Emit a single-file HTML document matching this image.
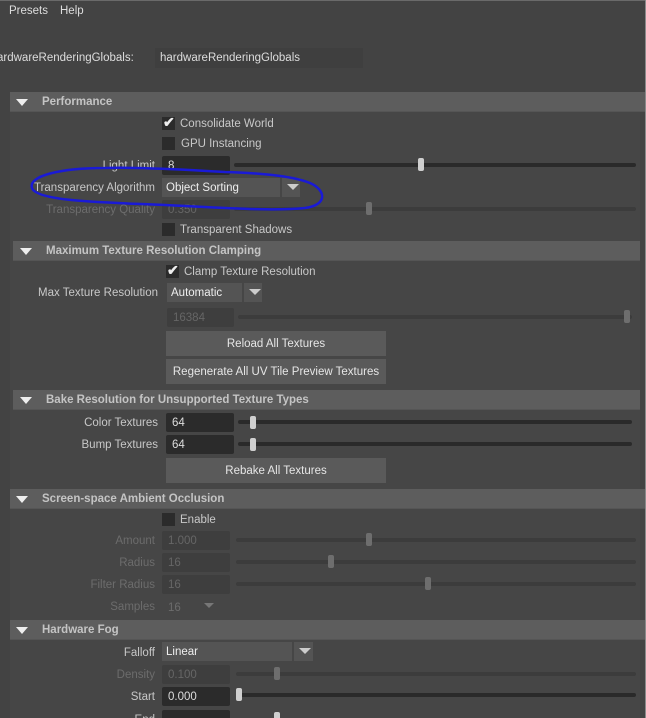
<!DOCTYPE html>
<html><head><style>
*{margin:0;padding:0;box-sizing:border-box}
html,body{width:646px;height:718px;overflow:hidden}
body{background:#434343;font-family:"Liberation Sans",sans-serif;font-size:11.5px;color:#c8c8c8;position:relative}
.a{position:absolute;white-space:nowrap}
.t{position:absolute;white-space:nowrap;line-height:14px}
.r{text-align:right}
.dim{color:#6c6c6c}
.hdr{position:absolute;height:20px;background:#5d5d5d;border-bottom:1px solid #555;font-weight:bold;color:#c4c4c4;line-height:20px}
.tri{position:absolute;top:7px;width:0;height:0;border-left:6px solid transparent;border-right:6px solid transparent;border-top:7px solid #eee}
.f{position:absolute;height:19px;background:#2b2b2b;border-radius:2px;color:#ddd;line-height:20px;padding-left:6px}
.fd{background:#3e3e3e;color:#666}
.dd{position:absolute;height:19px;background:#545454;color:#eee;line-height:20px;padding-left:4px}
.arr{position:absolute;height:19px;background:#545454}
.arr:after{content:"";position:absolute;left:5px;top:6px;border-left:6px solid transparent;border-right:6px solid transparent;border-top:6px solid #ccc}
.cb{position:absolute;width:13px;height:13px;background:#2b2b2b}
.ck{position:absolute;left:1px;top:-3px;font-size:14px;color:#eee;font-weight:bold}
.tr{position:absolute;height:4px;background:#2a2a2a;border-radius:2px}
.trd{background:#3c3c3c}
.h{position:absolute;width:6px;height:13px;background:#cfcfcf;border-radius:2px}
.hd{background:#6e6e6e}
.btn{position:absolute;height:25px;background:#5a5a5a;color:#e6e6e6;text-align:center;line-height:26px}
</style></head><body>
<div class="a" style="left:0;top:0;width:646px;height:1px;background:#6a6a6a"></div>
<div class="a" style="left:645px;top:0;width:1px;height:718px;background:#8a8a8a"></div>
<div class="t" style="left:9px;top:4px;color:#ddd">Presets</div>
<div class="t" style="left:60px;top:4px;color:#ddd">Help</div>
<div class="t" style="left:-3px;top:51px;color:#ddd">ardwareRenderingGlobals:</div>
<div class="a" style="left:155px;top:48px;width:208px;height:20px;background:#3f3f3f"></div>
<div class="t" style="left:160px;top:51px;color:#ddd">hardwareRenderingGlobals</div>

<div class="a" style="left:10px;top:112px;width:630px;height:606px;background:#464646"></div>

<div class="hdr" style="left:10px;top:92px;width:635px;padding-left:32px">Performance<div class="tri" style="left:6px"></div></div>
<div class="cb" style="left:162px;top:117px"><span class="ck">✔</span></div><div class="t" style="left:180px;top:117px">Consolidate World</div>
<div class="cb" style="left:162px;top:137px"></div><div class="t" style="left:181px;top:137px">GPU Instancing</div>
<div class="t r" style="left:0;width:155px;top:159px">Light Limit</div>
<div class="f" style="left:162px;top:156px;width:68px">8</div>
<div class="tr" style="left:234px;top:163px;width:402px"></div><div class="h" style="left:418px;top:158px"></div>
<div class="t r" style="left:0;width:155px;top:181px">Transparency Algorithm</div>
<div class="dd" style="left:162px;top:178px;width:118px">Object Sorting</div><div class="arr" style="left:282px;top:178px;width:18px"></div>
<div class="t r dim" style="left:0;width:155px;top:203px">Transparency Quality</div>
<div class="f fd" style="left:162px;top:200px;width:68px">0.350</div>
<div class="tr trd" style="left:234px;top:207px;width:402px"></div><div class="h hd" style="left:366px;top:202px"></div>
<div class="cb" style="left:162px;top:223px"></div><div class="t" style="left:180px;top:223px">Transparent Shadows</div>

<div class="hdr" style="left:13px;top:241px;width:627px;padding-left:33px">Maximum Texture Resolution Clamping<div class="tri" style="left:7px"></div></div>
<div class="cb" style="left:166px;top:265px"><span class="ck">✔</span></div><div class="t" style="left:184px;top:265px">Clamp Texture Resolution</div>
<div class="t r" style="left:0;width:158px;top:286px">Max Texture Resolution</div>
<div class="dd" style="left:167px;top:283px;width:75px">Automatic</div><div class="arr" style="left:244px;top:283px;width:18px"></div>
<div class="f fd" style="left:167px;top:308px;width:67px">16384</div>
<div class="tr trd" style="left:238px;top:315px;width:394px"></div><div class="h hd" style="left:624px;top:310px"></div>
<div class="btn" style="left:166px;top:331px;width:220px">Reload All Textures</div>
<div class="btn" style="left:166px;top:359px;width:220px">Regenerate All UV Tile Preview Textures</div>

<div class="hdr" style="left:13px;top:390px;width:627px;padding-left:33px">Bake Resolution for Unsupported Texture Types<div class="tri" style="left:7px"></div></div>
<div class="t r" style="left:0;width:158px;top:416px">Color Textures</div>
<div class="f" style="left:166px;top:413px;width:68px">64</div>
<div class="tr" style="left:238px;top:420px;width:394px"></div><div class="h" style="left:250px;top:416px"></div>
<div class="t r" style="left:0;width:158px;top:438px">Bump Textures</div>
<div class="f" style="left:166px;top:435px;width:68px">64</div>
<div class="tr" style="left:238px;top:442px;width:394px"></div><div class="h" style="left:250px;top:438px"></div>
<div class="btn" style="left:166px;top:458px;width:220px">Rebake All Textures</div>

<div class="hdr" style="left:10px;top:489px;width:635px;padding-left:32px">Screen-space Ambient Occlusion<div class="tri" style="left:6px"></div></div>
<div class="cb" style="left:162px;top:513px"></div><div class="t" style="left:180px;top:513px">Enable</div>
<div class="t r dim" style="left:0;width:155px;top:534px">Amount</div>
<div class="f fd" style="left:162px;top:531px;width:68px">1.000</div>
<div class="tr trd" style="left:236px;top:538px;width:400px"></div><div class="h hd" style="left:366px;top:533px"></div>
<div class="t r dim" style="left:0;width:155px;top:556px">Radius</div>
<div class="f fd" style="left:162px;top:553px;width:68px">16</div>
<div class="tr trd" style="left:236px;top:560px;width:400px"></div><div class="h hd" style="left:328px;top:555px"></div>
<div class="t r dim" style="left:0;width:155px;top:578px">Filter Radius</div>
<div class="f fd" style="left:162px;top:575px;width:68px">16</div>
<div class="tr trd" style="left:236px;top:582px;width:400px"></div><div class="h hd" style="left:425px;top:577px"></div>
<div class="t r dim" style="left:0;width:155px;top:600px">Samples</div>
<div class="t dim" style="left:168px;top:601px">16</div>
<div class="a" style="left:204px;top:603px;border-left:5px solid transparent;border-right:5px solid transparent;border-top:5px solid #777"></div>

<div class="hdr" style="left:10px;top:620px;width:635px;padding-left:32px">Hardware Fog<div class="tri" style="left:6px"></div></div>
<div class="t r" style="left:0;width:155px;top:646px">Falloff</div>
<div class="dd" style="left:162px;top:642px;width:130px">Linear</div><div class="arr" style="left:294px;top:642px;width:19px"></div>
<div class="t r dim" style="left:0;width:155px;top:668px">Density</div>
<div class="f fd" style="left:162px;top:665px;width:68px">0.100</div>
<div class="tr trd" style="left:236px;top:672px;width:400px"></div><div class="h hd" style="left:274px;top:667px"></div>
<div class="t r" style="left:0;width:155px;top:690px">Start</div>
<div class="f" style="left:162px;top:687px;width:68px">0.000</div>
<div class="tr" style="left:236px;top:693px;width:400px"></div><div class="h" style="left:236px;top:688px"></div>
<div class="f" style="left:162px;top:710px;width:68px"></div>
<div class="t r" style="left:0;width:155px;top:713px">End</div>
<div class="h" style="left:274px;top:712px"></div>

<svg class="a" style="left:0;top:0" width="646" height="718"><path d="M105,168 C60,168 28,176 32,188 C36,200 90,202 140,204 C200,206 265,212 305,208 C328,205 326,190 310,183 C290,175 255,173 225,172 C190,170 140,167 105,168" fill="none" stroke="#1a1ad6" stroke-width="2.5"/></svg>
</body></html>
